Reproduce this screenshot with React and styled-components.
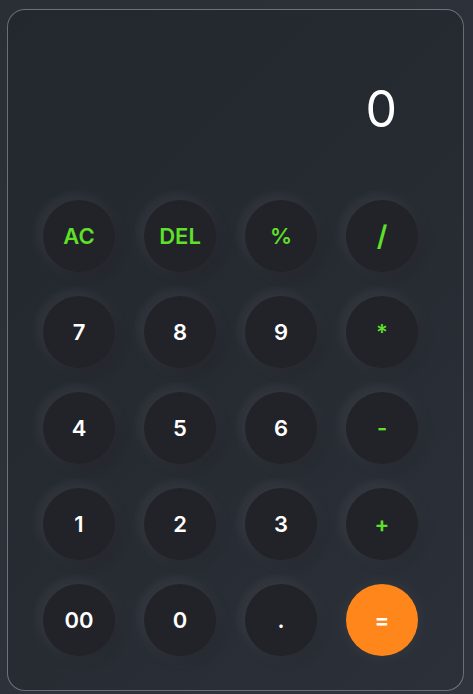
import React, { useState } from "react";
import styled, { createGlobalStyle } from "styled-components";

const GlobalStyle = createGlobalStyle`
  html, body {
    margin: 0;
    padding: 0;
    background: linear-gradient(135deg, #2a2e35, #30353d);
    min-height: 100%;
  }
  * { box-sizing: border-box; }
`;

// ----- Styled Components -----
const Page = styled.div`
  padding: 9px 9px 3px 7px;
  font-family: "Inter", "Roboto", sans-serif;
`;

const Card = styled.div`
  width: 457px;
  height: 682px;
  border: 1px solid rgba(255, 255, 255, 0.32);
  border-radius: 18px;
  background: linear-gradient(135deg, #23272e 0%, #262a31 50%, #2c3139 100%);
  padding: 0 45px 0 35px;
  display: flex;
  flex-direction: column;
`;

const Display = styled.div`
  margin-top: 74px;
  height: 50px;
  padding-right: 21px;
  text-align: right;
  font-size: 50px;
  line-height: 1;
  color: #ffffff;
  font-weight: 400;
`;

const Keys = styled.div`
  margin-top: 66px;
  display: grid;
  grid-template-columns: repeat(4, 72px);
  grid-auto-rows: 72px;
  column-gap: 29px;
  row-gap: 24px;
`;

const Key = styled.button`
  width: 72px;
  height: 72px;
  border-radius: 50%;
  border: none;
  padding: 0;
  cursor: pointer;
  font-family: inherit;
  font-size: 22px;
  font-weight: 600;
  color: ${({ $op }) => ($op ? "#5fe02a" : "#ffffff")};
  background: ${({ $equal }) => ($equal ? "#fe861b" : "#212329")};
  box-shadow: ${({ $equal }) =>
    $equal
      ? "0 0 18px rgba(255,255,255,0.05)"
      : "0 0 20px rgba(255,255,255,0.07), -5px -5px 14px rgba(255,255,255,0.04), 5px 5px 12px rgba(0,0,0,0.18)"};
  display: flex;
  align-items: center;
  justify-content: center;

  &:hover {
    filter: brightness(1.1);
  }
`;

const keys = [
  { label: "AC", op: true },
  { label: "DEL", op: true },
  { label: "%", op: true },
  { label: "/", op: true, big: true },
  { label: "7" },
  { label: "8" },
  { label: "9" },
  { label: "*", op: true },
  { label: "4" },
  { label: "5" },
  { label: "6" },
  { label: "-", op: true },
  { label: "1" },
  { label: "2" },
  { label: "3" },
  { label: "+", op: true },
  { label: "00" },
  { label: "0" },
  { label: "." },
  { label: "=", equal: true },
];

// ----- Main Component -----
const App = () => {
  const [value, setValue] = useState("0");

  const press = (k) => {
    if (k === "AC") return setValue("0");
    if (k === "DEL") return setValue(value.length > 1 ? value.slice(0, -1) : "0");
    if (k === "=") {
      try {
        const r = Function(`"use strict"; return (${value.replace(/%/g, "/100")})`)();
        setValue(String(r));
      } catch (e) {
        setValue("0");
      }
      return;
    }
    setValue(value === "0" && k !== "." ? k : value + k);
  };

  return (
    <>
      <GlobalStyle />
      <Page>
        <Card>
          <Display>{value}</Display>
          <Keys>
            {keys.map((k) => (
              <Key
                key={k.label}
                $op={k.op}
                $equal={k.equal}
                style={k.big ? { fontSize: 28 } : undefined}
                onClick={() => press(k.label)}
              >
                {k.label}
              </Key>
            ))}
          </Keys>
        </Card>
      </Page>
    </>
  );
};

export default App;
